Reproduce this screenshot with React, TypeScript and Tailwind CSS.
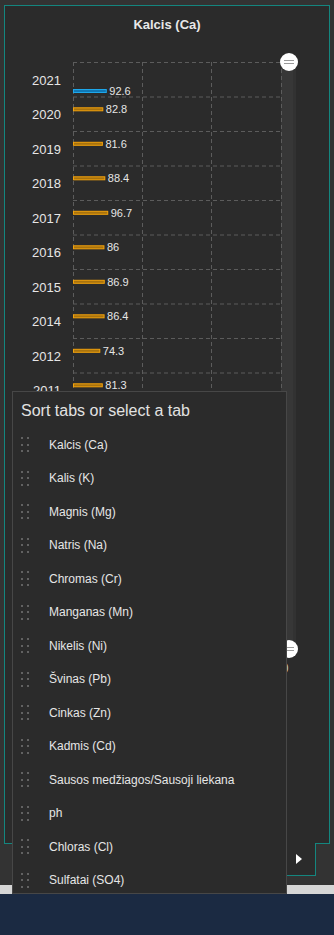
import React from 'react';

const rows = [
  { year: '2021', value: 92.6, active: true },
  { year: '2020', value: 82.8 },
  { year: '2019', value: 81.6 },
  { year: '2018', value: 88.4 },
  { year: '2017', value: 96.7 },
  { year: '2016', value: 86 },
  { year: '2015', value: 86.9 },
  { year: '2014', value: 86.4 },
  { year: '2012', value: 74.3 },
  { year: '2011', value: 81.3 },
];

const tabs = [
  'Kalcis (Ca)',
  'Kalis (K)',
  'Magnis (Mg)',
  'Natris (Na)',
  'Chromas (Cr)',
  'Manganas (Mn)',
  'Nikelis (Ni)',
  'Švinas (Pb)',
  'Cinkas (Zn)',
  'Kadmis (Cd)',
  'Sausos medžiagos/Sausoji liekana',
  'ph',
  'Chloras (Cl)',
  'Sulfatai (SO4)',
];

const PX_PER_UNIT = 0.354;
const STEP = 34.5;

function Handle({ cx, cy }: { cx: number; cy: number }) {
  return (
    <g>
      <circle cx={cx} cy={cy} r={9} fill="#ffffff" />
      <line x1={cx - 5} x2={cx + 5} y1={cy - 1.5} y2={cy - 1.5} stroke="#9a9a9a" strokeWidth={1} />
      <line x1={cx - 5} x2={cx + 5} y1={cy + 1.5} y2={cy + 1.5} stroke="#9a9a9a" strokeWidth={1} />
    </g>
  );
}

function Chart() {
  const hLines: number[] = [];
  for (let y = 62; y <= 660; y += STEP) hLines.push(y);

  return (
    <svg width={324} height={799} viewBox="5 44 324 799" className="block">
      {/* scroll track */}
      <rect x={281} y={62} width={15} height={587} fill="#373737" />
      <rect x={293} y={62} width={3} height={587} fill="#323232" />

      {/* grid */}
      {hLines.map((y) => (
        <line key={y} x1={73} x2={281} y1={y + 0.5} y2={y + 0.5} stroke="#5c5c5c" strokeDasharray="4 3" />
      ))}
      {[73, 142, 211, 281].map((x) => (
        <line key={x} x1={x + 0.5} x2={x + 0.5} y1={62} y2={660} stroke="#5c5c5c" strokeDasharray="4 3" />
      ))}

      {rows.map((r, i) => {
        const labelY = 80 + STEP * i;
        const barY = r.active ? 91 : labelY - 5.2;
        const w = r.value * PX_PER_UNIT;
        return (
          <g key={r.year} fontFamily="'Liberation Sans', Arial, sans-serif">
            <text x={61} y={labelY + 4.7} textAnchor="end" fontSize={13} fill="#e6e6e6">
              {r.year}
            </text>
            <rect
              x={73.5}
              y={barY - 1.5}
              width={w}
              height={3}
              fill={r.active ? '#0f78b6' : '#a8730e'}
              stroke={r.active ? '#1ea7ea' : '#f2a20c'}
              strokeWidth={1}
            />
            <text x={73 + w + 3.5} y={barY + 4} fontSize={11} fill="#e6e6e6">
              {r.value}
            </text>
          </g>
        );
      })}

      <Handle cx={289} cy={62} />
      <Handle cx={289} cy={649} />
      <text x={285} y={671} fontSize={11} fill="#d0d0d0" fontFamily="'Liberation Sans', Arial, sans-serif">
        )
      </text>
    </svg>
  );
}

function DragDots() {
  return (
    <div className="grid grid-cols-2 gap-x-[4px] gap-y-[4.5px] w-[8px]">
      {Array.from({ length: 6 }).map((_, i) => (
        <span key={i} className="w-[2px] h-[2px] bg-[#626262]" />
      ))}
    </div>
  );
}

export default function App() {
  return (
    <div className="relative w-[334px] h-[935px] bg-[#333333] font-['Liberation_Sans',Arial,sans-serif] overflow-hidden flex flex-col">
      <div className="pt-[5px] px-[4px]">
        <div className="h-[838px] border border-b-0 border-[#14867f] bg-[#2b2b2b] flex flex-col">
          <div className="h-[38px] flex items-center justify-center text-[13px] font-bold text-[#e8e8e8]">
            Kalcis (Ca)
          </div>
          <Chart />
        </div>
        <div className="flex h-[33px]">
          <div className="w-[12px] border-t border-[#14867f]" />
          <div className="w-[300px] bg-[#2b2b2b] border-x border-b border-[#14867f] flex items-center justify-end pr-[13px]">
            <svg width={6} height={10} viewBox="0 0 6 10">
              <polygon points="0,0 6,5 0,10" fill="#ffffff" />
            </svg>
          </div>
          <div className="flex-1 border-t border-[#14867f]" />
        </div>
      </div>
      <div className="h-[9px]" />
      <div className="h-[9px] bg-[#d6d6d6]" />
      <div className="flex-1 bg-[#1b2a42]" />

      {/* tab sort menu */}
      <div className="absolute left-[12px] top-[391px] w-[275px] h-[503px] border border-[#474747] bg-[#2b2b2b] overflow-hidden">
        <div className="h-[36px] pl-[8px] pt-[10px] text-[16px] leading-[18px] text-[#e2e2e2]">
          Sort tabs or select a tab
        </div>
        {tabs.map((t) => (
          <div key={t} className="h-[33.5px] flex items-center pl-[8px] gap-[20px]">
            <DragDots />
            <span className="text-[12px] text-[#e6e6e6] whitespace-nowrap">{t}</span>
          </div>
        ))}
      </div>
    </div>
  );
}
